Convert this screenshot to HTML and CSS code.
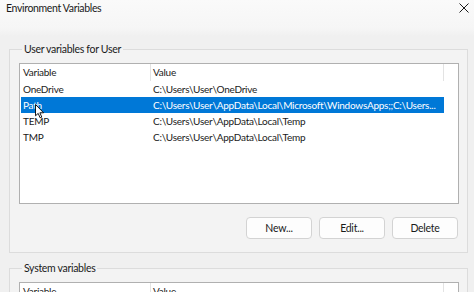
FILE: index.html
```html
<!DOCTYPE html>
<html>
<head>
<meta charset="utf-8">
<link rel="stylesheet" href="styles.css">
</head>
<body>
<div class="window">
  <div class="titlebar">
    <span class="title">Environment Variables</span>
    <svg class="close" width="10" height="10" viewBox="0 0 10 10"><path d="M0.5 0.5 L9.5 9.5 M9.5 0.5 L0.5 9.5" stroke="#1a1a1a" stroke-width="1" fill="none"/></svg>
  </div>
  <div class="content">
    <fieldset class="group">
      <legend>User variables for User</legend>
      <div class="list">
        <div class="row head"><span class="c1">Variable</span><span class="c2">Value</span></div>
        <div class="row"><span class="c1">OneDrive</span><span class="c2">C:\Users\User\OneDrive</span></div>
        <div class="row sel"><span class="c1">Path</span><span class="c2">C:\Users\User\AppData\Local\Microsoft\WindowsApps;;C:\Users...</span></div>
        <div class="row"><span class="c1">TEMP</span><span class="c2">C:\Users\User\AppData\Local\Temp</span></div>
        <div class="row"><span class="c1">TMP</span><span class="c2">C:\Users\User\AppData\Local\Temp</span></div>
      </div>
      <div class="buttons">
        <button class="btn">New...</button>
        <button class="btn">Edit...</button>
        <button class="btn">Delete</button>
      </div>
    </fieldset>
    <fieldset class="group system">
      <legend>System variables</legend>
      <div class="list">
        <div class="row head"><span class="c1">Variable</span><span class="c2">Value</span></div>
      </div>
    </fieldset>
  </div>
  <svg class="cursor" width="10" height="15" viewBox="0 0 10 15"><path d="M0.5 0.5 L0.5 11.8 L3.2 9.4 L5.1 13.8 L6.8 13.1 L4.9 8.8 L8.6 8.8 Z" fill="#fff" stroke="#000" stroke-width="0.9" stroke-linejoin="round"/></svg>
</div>
</body>
</html>
```
FILE: styles.css
```css
html, body {
  margin: 0;
  padding: 0;
}
body {
  background: #f0f0f0;
  font-family: Lato, "Noto Sans", sans-serif;
  font-size: 10px;
  letter-spacing: -0.25px;
  color: #1a1a1a;
}
.window {
  position: relative;
  width: 474px;
  height: 292px;
  overflow: hidden;
  background: linear-gradient(#fafafa 0, #f6f6f6 28px, #f0f0f0 36px);
}
.titlebar {
  display: flex;
  justify-content: space-between;
  align-items: flex-start;
  height: 30px;
  padding-left: 6px;
  line-height: 16px;
  font-size: 10.5px;
  letter-spacing: -0.35px;
}
.close {
  margin-top: 3px;
  margin-right: 5px;
}
.content {
  padding: 11px 0 0 9px;
}
.group {
  box-sizing: border-box;
  width: 459px;
  margin: 0;
  padding: 6px 8px 13px 9px;
  border: 1px solid #dcdcdc;
  background: #f3f3f3;
}
.group legend {
  padding: 0 2px;
  margin-left: 3px;
  line-height: 16px;
  font-size: 10.5px;
  letter-spacing: -0.3px;
}
.system {
  margin-top: 7px;
}
.list {
  box-sizing: border-box;
  width: 440px;
  height: 141px;
  padding: 0 0 0 1px;
  border: 1px solid #b0b0b0;
  background: #fff;
}
.row {
  display: flex;
  width: 423px;
  height: 16px;
  line-height: 16px;
  white-space: nowrap;
}
.row.head {
  height: 17px;
  line-height: 17px;
  color: #1a1a1a;
}
.c1 {
  box-sizing: border-box;
  width: 130px;
  padding-left: 2px;
  flex: none;
}
.c2 {
  padding-left: 2px;
  flex: 1;
  overflow: hidden;
}
.head .c1 {
  border-right: 1px solid #e3e3e3;
}
.head .c2 {
  border-right: 1px solid #e3e3e3;
  flex: none;
  width: 290px;
}
.sel {
  background: #0078d7;
  color: #fff;
}
.buttons {
  display: flex;
  justify-content: flex-end;
  gap: 7px;
  margin-top: 13px;
  margin-right: 1px;
}
.btn {
  box-sizing: border-box;
  width: 66px;
  height: 22px;
  padding: 0;
  border: 1px solid #d3d3d3;
  border-radius: 4px;
  background: #fdfdfd;
  font-family: inherit;
  font-size: 10.5px;
  letter-spacing: -0.25px;
  color: #1a1a1a;
}
.cursor {
  position: absolute;
  left: 35px;
  top: 104px;
}
```
